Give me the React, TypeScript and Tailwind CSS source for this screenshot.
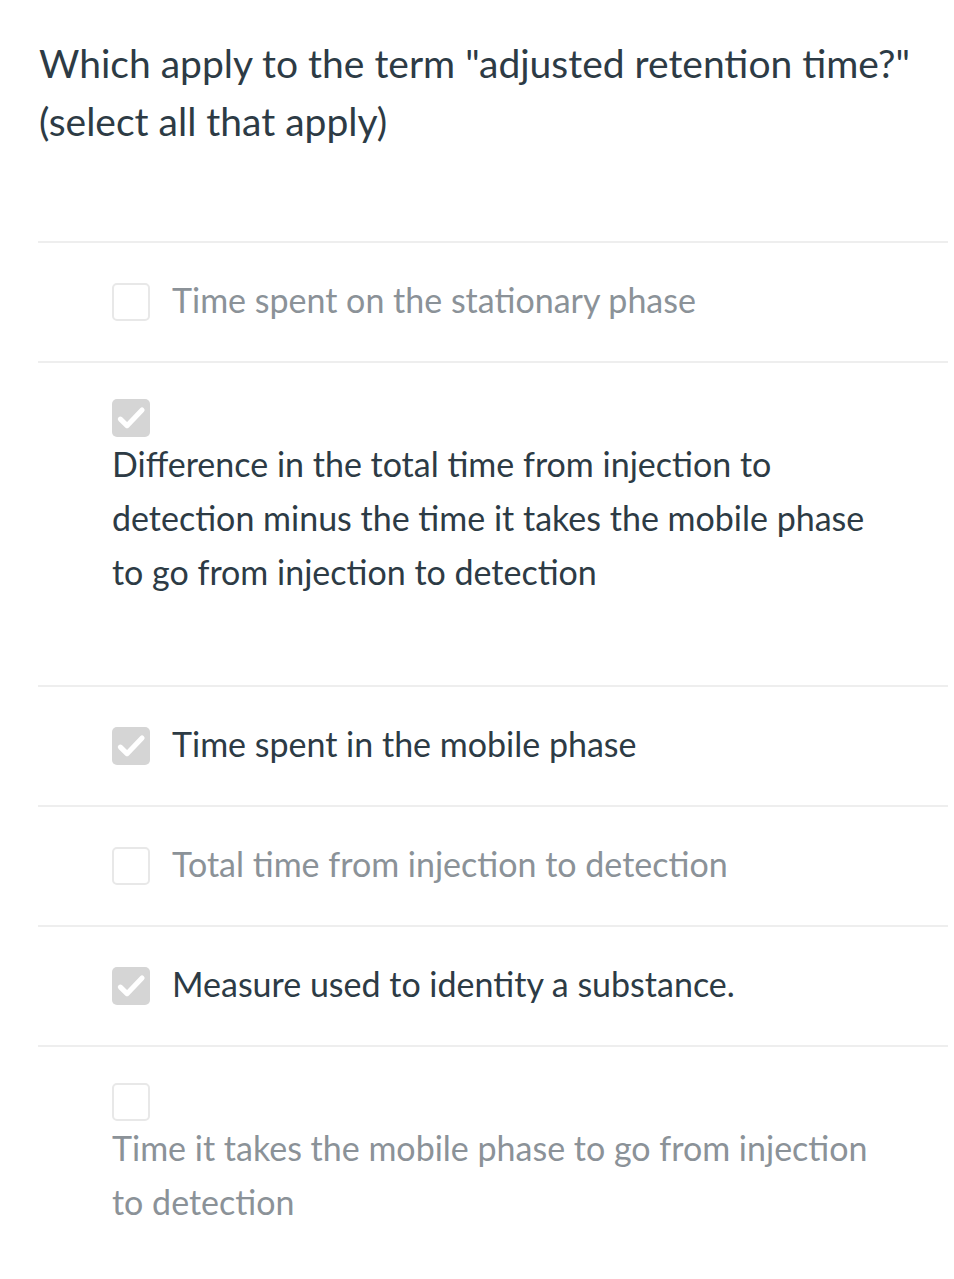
import React from 'react';

interface Answer {
  id: string;
  text: string;
  checked: boolean;
  wrap?: boolean;
}

const answers: Answer[] = [
  { id: 'a1', text: 'Time spent on the stationary phase', checked: false },
  {
    id: 'a2',
    text: 'Difference in the total time from injection to detection minus the time it takes the mobile phase to go from injection to detection',
    checked: true,
    wrap: true,
  },
  { id: 'a3', text: 'Time spent in the mobile phase', checked: true },
  { id: 'a4', text: 'Total time from injection to detection', checked: false },
  { id: 'a5', text: 'Measure used to identity a substance.', checked: true },
  {
    id: 'a6',
    text: 'Time it takes the mobile phase to go from injection to detection',
    checked: false,
    wrap: true,
  },
];

function Box({ checked }: { checked: boolean }) {
  if (checked) {
    return (
      <span className="flex h-[38px] w-[38px] shrink-0 items-center justify-center rounded-[5px] bg-[#d5d5d5]">
        <svg viewBox="0 0 24 24" className="h-[34px] w-[34px]" fill="none">
          <path d="M4.5 12.8l4.7 4.6L19.8 6.4" stroke="#ffffff" strokeWidth="3.6" strokeLinecap="round" strokeLinejoin="round" />
        </svg>
      </span>
    );
  }
  return <span className="block h-[38px] w-[38px] shrink-0 rounded-[5px] border-2 border-[#e8e8e8] bg-white" />;
}

export default function App() {
  return (
    <div className="min-h-[1279px] bg-white font-['Lato','Liberation_Sans',sans-serif]">
      <h1 className="pl-[39px] pt-[34px] text-[39px] leading-[58px] text-[#2d3b45]">
        Which apply to the term "adjusted retention time?"
        <br />
        (select all that apply)
      </h1>

      <ul className="ml-[38px] mr-[6px] mt-[91px]">
        {answers.map((a) => (
          <li key={a.id} className="border-t-2 border-[#eeeeee]">
            {a.wrap ? (
              <div className="pb-[86px] pl-[74px] pt-[36px]">
                <Box checked={a.checked} />
                <p className={`w-[775px] text-[34px] leading-[54px] ${a.checked ? 'text-[#2d3b45]' : 'text-[#8b9298]'}`}>{a.text}</p>
              </div>
            ) : (
              <div className="flex h-[118px] items-center gap-[22px] pl-[74px]">
                <Box checked={a.checked} />
                <span className={`mb-[5px] text-[34px] leading-[54px] ${a.checked ? 'text-[#2d3b45]' : 'text-[#8b9298]'}`}>{a.text}</span>
              </div>
            )}
          </li>
        ))}
      </ul>
    </div>
  );
}
